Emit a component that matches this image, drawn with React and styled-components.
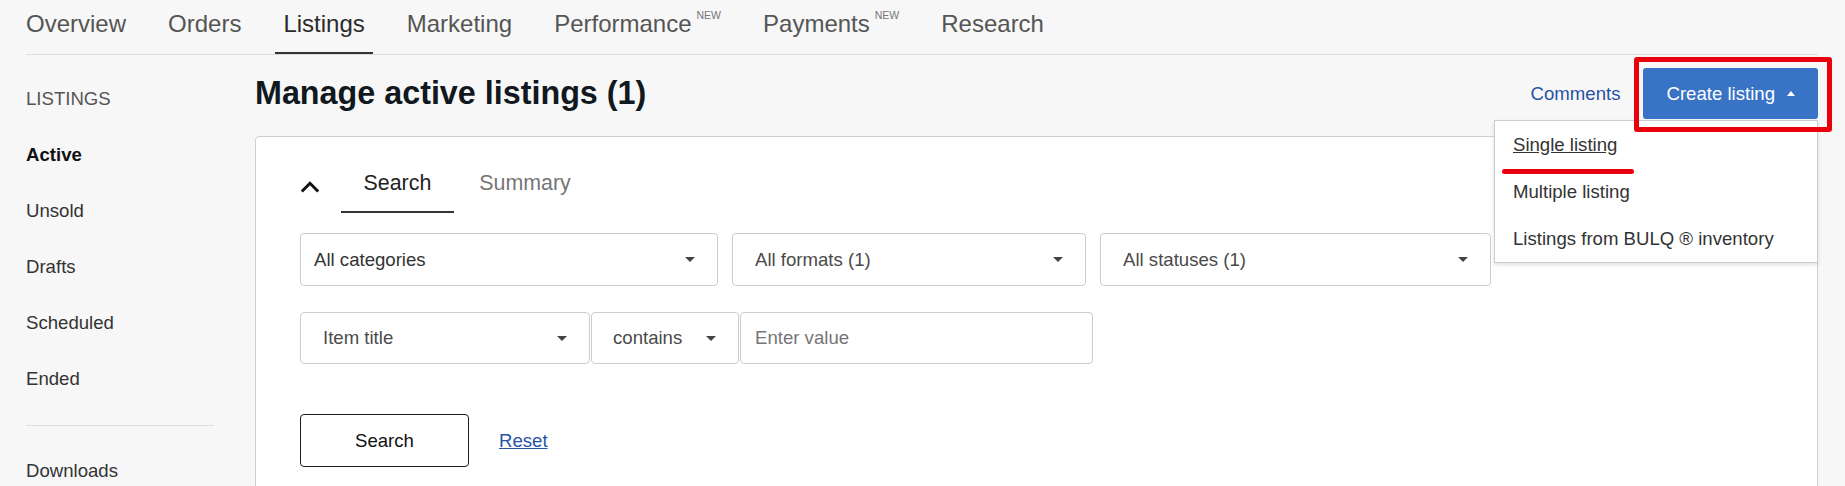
import React from 'react'
import styled, {createGlobalStyle} from 'styled-components'

const GlobalStyle = createGlobalStyle`
  html, body {
    margin: 0;
    padding: 0;
    overflow: hidden;
    background: #f7f7f7;
    font-family: "Liberation Sans", Arial, sans-serif;
    color: #333333;
  }
  * { box-sizing: border-box; }
`

const Page = styled.div`
  padding: 0 27px 0 26px;
  height: 486px;
`

const TopNav = styled.nav`
  display: flex;
  height: 55px;
  border-bottom: 1px solid #dddddd;
`

const NavList = styled.ul`
  display: flex;
  gap: 26px;
  margin: 0 0 0 -8px;
  padding: 0;
  list-style: none;
`

const NavItem = styled.li`
  display: flex;
  align-items: center;
  height: 54px;
  padding: 0 8px 6px;
  font-size: 24px;
  color: ${p => p.$active ? '#2b2b2b' : '#555555'};
  box-shadow: ${p => p.$active ? 'inset 0 -2px 0 #333333' : 'none'};
`

const NewBadge = styled.span`
  align-self: flex-start;
  margin: 10px 0 0 5px;
  font-size: 10.5px;
  line-height: 1;
  color: #767676;
`

const Body = styled.div`
  display: flex;
`

const Sidebar = styled.aside`
  width: 229px;
  flex-shrink: 0;
  padding-top: 16px;
`

const SideItem = styled.div`
  display: flex;
  align-items: center;
  height: 56px;
  font-size: 18.6px;
  color: ${p => p.$muted ? '#555555' : p.$active ? '#111111' : '#333333'};
  font-weight: ${p => p.$active ? 700 : 400};
  text-transform: ${p => p.$muted ? 'uppercase' : 'none'};
`

const SideDivider = styled.hr`
  width: 188px;
  margin: 18px 0 17px;
  border: 0;
  border-top: 1px solid #dddddd;
`

const Main = styled.main`
  flex: 1;
  min-width: 0;
`

const HeaderRow = styled.div`
  display: flex;
  align-items: center;
  justify-content: space-between;
  padding: 13px 0 17px;
`

const Heading = styled.h1`
  margin: 0;
  font-size: 32.3px;
  font-weight: 700;
  color: #111820;
`

const Actions = styled.div`
  display: flex;
  align-items: center;
  gap: 23px;
`

const TextLink = styled.a`
  font-size: 18.6px;
  color: #2853a4;
  text-decoration: ${p => p.$underline ? 'underline' : 'none'};
  cursor: pointer;
`

const CreateWrap = styled.div`
  position: relative;
`

const CreateButton = styled.button`
  display: flex;
  align-items: center;
  gap: 12px;
  height: 51px;
  padding: 0 23px;
  border: 0;
  border-radius: 3px;
  background: #3873c6;
  color: #ffffff;
  font-family: inherit;
  font-size: 18.6px;
`

const CaretUp = styled.span`
  width: 0;
  height: 0;
  border-left: 4.5px solid transparent;
  border-right: 4.5px solid transparent;
  border-bottom: 5px solid #ffffff;
`

const Menu = styled.ul`
  position: absolute;
  top: calc(100% + 1px);
  right: 0;
  width: 324px;
  margin: 0;
  padding: 0;
  list-style: none;
  background: #ffffff;
  border: 1px solid #cccccc;
  box-shadow: 0 2px 4px rgba(0, 0, 0, 0.12);
  z-index: 2;
`

const MenuItem = styled.li`
  display: flex;
  align-items: center;
  height: 47px;
  padding-left: 18px;
  font-size: 18.6px;
  color: #333333;
  text-decoration: ${p => p.$underline ? 'underline' : 'none'};
`

const MarkUnderline = styled.span`
  position: absolute;
  left: 7px;
  top: 48px;
  width: 132px;
  height: 5px;
  border-radius: 3px;
  background: #e8000b;
`

const MarkBox = styled.span`
  position: absolute;
  left: -9px;
  top: -11px;
  width: 198px;
  height: 75px;
  border: 5px solid #e8000b;
  border-radius: 3px;
  z-index: 3;
  pointer-events: none;
`

const Card = styled.section`
  min-height: 420px;
  padding: 28px 44px;
  background: #ffffff;
  border: 1px solid #cfcfcf;
  border-radius: 4px;
`

const TabRow = styled.div`
  display: flex;
  align-items: center;
  height: 48px;
`

const Chevron = styled.svg`
  margin: 0 21px 4px 0;
`

const Tab = styled.div`
  display: flex;
  align-items: center;
  height: 48px;
  padding: 0 22.5px 9px;
  margin-right: 3px;
  font-size: 21.4px;
  color: ${p => p.$active ? '#222222' : '#767676'};
  border-bottom: 2px solid ${p => p.$active ? '#333333' : 'transparent'};
`

const FilterRow = styled.div`
  display: flex;
  gap: ${p => p.$gap}px;
  margin-top: ${p => p.$top}px;
`

const Select = styled.div`
  display: flex;
  align-items: center;
  justify-content: space-between;
  width: ${p => p.$w}px;
  height: ${p => p.$h}px;
  padding: 0 22px 0 ${p => p.$pad}px;
  background: #ffffff;
  border: 1px solid #cccccc;
  border-radius: 4px;
  font-size: 18.6px;
  color: ${p => p.$dark ? '#333333' : '#4a4a4a'};
`

const Caret = styled.span`
  width: 0;
  height: 0;
  border-left: 5px solid transparent;
  border-right: 5px solid transparent;
  border-top: 5px solid #444444;
`

const ValueInput = styled.input`
  width: 353px;
  height: 52px;
  padding: 0 14px;
  border: 1px solid #cccccc;
  border-radius: 4px;
  font-family: inherit;
  font-size: 18.6px;
  color: #333333;
  background: #ffffff;

  &::placeholder {
    color: #767676;
  }
`

const ButtonRow = styled.div`
  display: flex;
  align-items: center;
  gap: 30px;
  margin-top: 50px;
`

const SecondaryButton = styled.button`
  width: 169px;
  height: 53px;
  border: 1px solid #1a1a1a;
  border-radius: 4px;
  background: #ffffff;
  font-family: inherit;
  font-size: 18.6px;
  color: #111111;
`

const navLinks = [
  {text: 'Overview'},
  {text: 'Orders'},
  {text: 'Listings', active: true},
  {text: 'Marketing'},
  {text: 'Performance', isNew: true},
  {text: 'Payments', isNew: true},
  {text: 'Research'},
]

const sideLinks = ['Active', 'Unsold', 'Drafts', 'Scheduled', 'Ended']

const App = () => {
  return (
    <Page>
      <GlobalStyle />
      <TopNav>
        <NavList>
          {navLinks.map(el => (
            <NavItem key={el.text} $active={el.active}>
              {el.text}
              {el.isNew && <NewBadge>NEW</NewBadge>}
            </NavItem>
          ))}
        </NavList>
      </TopNav>

      <Body>
        <Sidebar>
          <SideItem $muted>Listings</SideItem>
          {sideLinks.map(text => (
            <SideItem key={text} $active={text === 'Active'}>{text}</SideItem>
          ))}
          <SideDivider />
          <SideItem>Downloads</SideItem>
        </Sidebar>

        <Main>
          <HeaderRow>
            <Heading>Manage active listings (1)</Heading>
            <Actions>
              <TextLink>Comments</TextLink>
              <CreateWrap>
                <CreateButton>
                  Create listing
                  <CaretUp />
                </CreateButton>
                <Menu>
                  <MenuItem $underline>Single listing</MenuItem>
                  <MenuItem>Multiple listing</MenuItem>
                  <MenuItem>Listings from BULQ ® inventory</MenuItem>
                  <MarkUnderline />
                </Menu>
                <MarkBox />
              </CreateWrap>
            </Actions>
          </HeaderRow>

          <Card>
            <TabRow>
              <Chevron width="20" height="12" viewBox="0 0 20 12">
                <polyline points="1.8,10.5 10,2.3 18.2,10.5" fill="none" stroke="#111111" strokeWidth="3" />
              </Chevron>
              <Tab $active>Search</Tab>
              <Tab>Summary</Tab>
            </TabRow>

            <FilterRow $gap={14} $top={20}>
              <Select $w={418} $h={53} $pad={13} $dark>All categories<Caret /></Select>
              <Select $w={354} $h={53} $pad={22}>All formats (1)<Caret /></Select>
              <Select $w={391} $h={53} $pad={22}>All statuses (1)<Caret /></Select>
            </FilterRow>

            <FilterRow $gap={1} $top={26}>
              <Select $w={290} $h={52} $pad={22}>Item title<Caret /></Select>
              <Select $w={148} $h={52} $pad={21}>contains<Caret /></Select>
              <ValueInput placeholder="Enter value" />
            </FilterRow>

            <ButtonRow>
              <SecondaryButton>Search</SecondaryButton>
              <TextLink $underline>Reset</TextLink>
            </ButtonRow>
          </Card>
        </Main>
      </Body>
    </Page>
  )
}

export default App
